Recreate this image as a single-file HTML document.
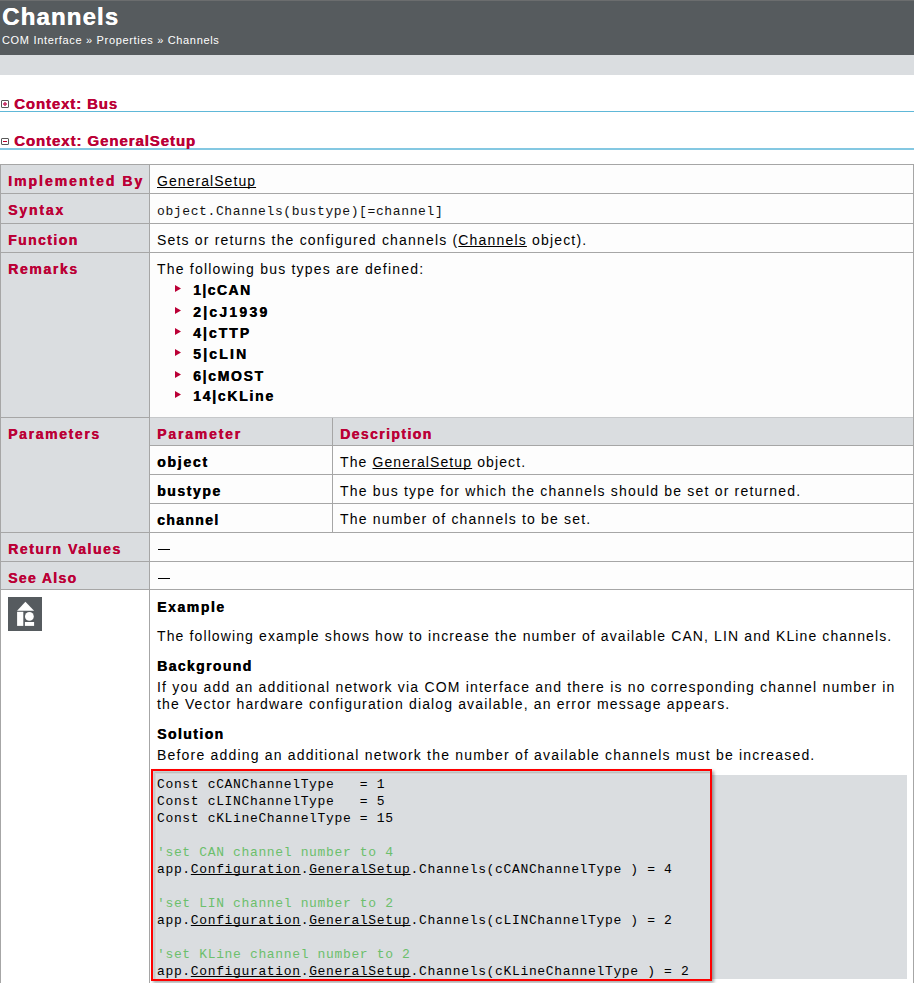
<!DOCTYPE html>
<html><head><meta charset="utf-8"><style>
html,body{margin:0;padding:0;background:#fff;width:914px;height:983px;overflow:hidden;position:relative}
body>div,body>svg{position:absolute}
.t{white-space:pre}
u{text-decoration:underline;text-underline-offset:1px;text-decoration-skip-ink:none}
</style></head><body>
<div style="left:0px;top:0px;width:914px;height:55px;background:#565b5e;"></div>
<div style="left:0px;top:0px;width:914px;height:1px;background:#6b6d6e;"></div>
<div class="t" style="left:2px;top:7px;font-family:'Liberation Sans',sans-serif;font-size:24px;line-height:20px;color:#fff;letter-spacing:1.143px;font-weight:bold;text-shadow:0.4px 0 0 #fff;">Channels</div>
<div class="t" style="left:2px;top:30px;font-family:'Liberation Sans',sans-serif;font-size:11px;line-height:20px;color:#fff;letter-spacing:0.674px;">COM Interface &raquo; Properties &raquo; Channels</div>
<div style="left:0px;top:55px;width:914px;height:20px;background:#dadde0;"></div>
<div style="left:1px;top:100px;width:6px;height:6px;border:1px solid #585858;border-radius:1px;background:#fff"></div>
<div style="left:4px;top:102px;width:2px;height:4px;background:#d4608a;"></div>
<div style="left:3px;top:103px;width:4px;height:2px;background:#d4608a;"></div>
<div style="left:4px;top:103px;width:2px;height:2px;background:#c8386a;"></div>
<div style="left:1px;top:138px;width:6px;height:5px;border:1px solid #585858;border-radius:1px;background:#fff"></div>
<div style="left:3px;top:141px;width:4px;height:1px;background:#c0002a;"></div>
<div style="left:0px;top:111px;width:914px;height:1px;background:#60b8d8;"></div>
<div style="left:0px;top:148px;width:914px;height:2px;background:#84c8e2;"></div>
<div class="t" style="left:14px;top:94px;font-family:'Liberation Sans',sans-serif;font-size:15px;line-height:20px;color:#bb0036;letter-spacing:0.879px;font-weight:bold;text-shadow:0.4px 0 0 #bb0036;">Context: Bus</div>
<div class="t" style="left:14px;top:131px;font-family:'Liberation Sans',sans-serif;font-size:15px;line-height:20px;color:#bb0036;letter-spacing:0.923px;font-weight:bold;text-shadow:0.4px 0 0 #bb0036;">Context: GeneralSetup</div>
<div style="left:0px;top:164px;width:914px;height:836px;background:#fdfdfd;"></div>
<div style="left:0px;top:164px;width:149px;height:836px;background:#dadde0;"></div>
<div style="left:1px;top:590px;width:148px;height:400px;background:#fff;"></div>
<div style="left:150px;top:590px;width:763px;height:400px;background:#fff;"></div>
<div style="left:150px;top:589px;width:763px;height:1px;background:#c9c9c9;"></div>
<div style="left:0px;top:164px;width:914px;height:1px;background:#a6a6a6;"></div>
<div style="left:0px;top:193px;width:914px;height:1px;background:#a6a6a6;"></div>
<div style="left:0px;top:223px;width:914px;height:1px;background:#a6a6a6;"></div>
<div style="left:0px;top:252px;width:914px;height:1px;background:#a6a6a6;"></div>
<div style="left:0px;top:417px;width:914px;height:1px;background:#a6a6a6;"></div>
<div style="left:0px;top:532px;width:914px;height:1px;background:#a6a6a6;"></div>
<div style="left:0px;top:561px;width:914px;height:1px;background:#a6a6a6;"></div>
<div style="left:0px;top:589px;width:914px;height:1px;background:#a6a6a6;"></div>
<div style="left:0px;top:164px;width:1px;height:1000px;background:#a6a6a6;"></div>
<div style="left:149px;top:164px;width:1px;height:1000px;background:#a6a6a6;"></div>
<div style="left:913px;top:164px;width:1px;height:1000px;background:#a6a6a6;"></div>
<div style="left:150px;top:418px;width:763px;height:27px;background:#dadde0;"></div>
<div style="left:150px;top:445px;width:763px;height:1px;background:#a6a6a6;"></div>
<div style="left:150px;top:474px;width:763px;height:1px;background:#a6a6a6;"></div>
<div style="left:150px;top:503px;width:763px;height:1px;background:#a6a6a6;"></div>
<div style="left:332px;top:418px;width:1px;height:114px;background:#a6a6a6;"></div>
<div style="left:150px;top:417px;width:763px;height:1px;background:#c6c8ca;"></div>
<div class="t" style="left:8px;top:171px;font-family:'Liberation Sans',sans-serif;font-size:14px;line-height:20px;color:#bb0036;letter-spacing:1.992px;font-weight:bold;text-shadow:0.4px 0 0 #bb0036;">Implemented By</div>
<div class="t" style="left:8px;top:200px;font-family:'Liberation Sans',sans-serif;font-size:14px;line-height:20px;color:#bb0036;letter-spacing:1.822px;font-weight:bold;text-shadow:0.4px 0 0 #bb0036;">Syntax</div>
<div class="t" style="left:8px;top:230px;font-family:'Liberation Sans',sans-serif;font-size:14px;line-height:20px;color:#bb0036;letter-spacing:1.420px;font-weight:bold;text-shadow:0.4px 0 0 #bb0036;">Function</div>
<div class="t" style="left:8px;top:259px;font-family:'Liberation Sans',sans-serif;font-size:14px;line-height:20px;color:#bb0036;letter-spacing:1.643px;font-weight:bold;text-shadow:0.4px 0 0 #bb0036;">Remarks</div>
<div class="t" style="left:8px;top:424px;font-family:'Liberation Sans',sans-serif;font-size:14px;line-height:20px;color:#bb0036;letter-spacing:1.637px;font-weight:bold;text-shadow:0.4px 0 0 #bb0036;">Parameters</div>
<div class="t" style="left:8px;top:539px;font-family:'Liberation Sans',sans-serif;font-size:14px;line-height:20px;color:#bb0036;letter-spacing:1.555px;font-weight:bold;text-shadow:0.4px 0 0 #bb0036;">Return Values</div>
<div class="t" style="left:8px;top:568px;font-family:'Liberation Sans',sans-serif;font-size:14px;line-height:20px;color:#bb0036;letter-spacing:1.342px;font-weight:bold;text-shadow:0.4px 0 0 #bb0036;">See Also</div>
<div class="t" style="left:157px;top:171px;font-family:'Liberation Sans',sans-serif;font-size:14px;line-height:20px;color:#000;letter-spacing:1.058px;"><u>GeneralSetup</u></div>
<div class="t" style="left:157px;top:202px;font-family:'Liberation Mono',monospace;font-size:13px;line-height:20px;color:#111;letter-spacing:0.620px;">object.Channels(bustype)[=channel]</div>
<div class="t" style="left:157px;top:230px;font-family:'Liberation Sans',sans-serif;font-size:14px;line-height:20px;color:#000;letter-spacing:1.180px;">Sets or returns the configured channels (<u>Channels</u> object).</div>
<div class="t" style="left:157px;top:259px;font-family:'Liberation Sans',sans-serif;font-size:14px;line-height:20px;color:#000;letter-spacing:1.199px;">The following bus types are defined:</div>
<svg style="left:175px;top:285px" width="7" height="7"><path d="M0 0L6 3.5L0 7Z" fill="#bb0036"/></svg>
<div class="t" style="left:193px;top:280px;font-family:'Liberation Sans',sans-serif;font-size:14px;line-height:20px;color:#000;letter-spacing:1.438px;font-weight:bold;text-shadow:0.4px 0 0 #000;">1|cCAN</div>
<svg style="left:175px;top:307px" width="7" height="7"><path d="M0 0L6 3.5L0 7Z" fill="#bb0036"/></svg>
<div class="t" style="left:193px;top:302px;font-family:'Liberation Sans',sans-serif;font-size:14px;line-height:20px;color:#000;letter-spacing:2.230px;font-weight:bold;text-shadow:0.4px 0 0 #000;">2|cJ1939</div>
<svg style="left:175px;top:328px" width="7" height="7"><path d="M0 0L6 3.5L0 7Z" fill="#bb0036"/></svg>
<div class="t" style="left:193px;top:323px;font-family:'Liberation Sans',sans-serif;font-size:14px;line-height:20px;color:#000;letter-spacing:2.016px;font-weight:bold;text-shadow:0.4px 0 0 #000;">4|cTTP</div>
<svg style="left:175px;top:349px" width="7" height="7"><path d="M0 0L6 3.5L0 7Z" fill="#bb0036"/></svg>
<div class="t" style="left:193px;top:344px;font-family:'Liberation Sans',sans-serif;font-size:14px;line-height:20px;color:#000;letter-spacing:2.194px;font-weight:bold;text-shadow:0.4px 0 0 #000;">5|cLIN</div>
<svg style="left:175px;top:371px" width="7" height="7"><path d="M0 0L6 3.5L0 7Z" fill="#bb0036"/></svg>
<div class="t" style="left:193px;top:366px;font-family:'Liberation Sans',sans-serif;font-size:14px;line-height:20px;color:#000;letter-spacing:1.680px;font-weight:bold;text-shadow:0.4px 0 0 #000;">6|cMOST</div>
<svg style="left:175px;top:391px" width="7" height="7"><path d="M0 0L6 3.5L0 7Z" fill="#bb0036"/></svg>
<div class="t" style="left:193px;top:386px;font-family:'Liberation Sans',sans-serif;font-size:14px;line-height:20px;color:#000;letter-spacing:1.732px;font-weight:bold;text-shadow:0.4px 0 0 #000;">14|cKLine</div>
<div class="t" style="left:157px;top:424px;font-family:'Liberation Sans',sans-serif;font-size:14px;line-height:20px;color:#bb0036;letter-spacing:1.814px;font-weight:bold;text-shadow:0.4px 0 0 #bb0036;">Parameter</div>
<div class="t" style="left:340px;top:424px;font-family:'Liberation Sans',sans-serif;font-size:14px;line-height:20px;color:#bb0036;letter-spacing:1.402px;font-weight:bold;text-shadow:0.4px 0 0 #bb0036;">Description</div>
<div class="t" style="left:157px;top:452px;font-family:'Liberation Sans',sans-serif;font-size:14px;line-height:20px;color:#000;letter-spacing:1.759px;font-weight:bold;text-shadow:0.4px 0 0 #000;">object</div>
<div class="t" style="left:157px;top:481px;font-family:'Liberation Sans',sans-serif;font-size:14px;line-height:20px;color:#000;letter-spacing:1.560px;font-weight:bold;text-shadow:0.4px 0 0 #000;">bustype</div>
<div class="t" style="left:157px;top:510px;font-family:'Liberation Sans',sans-serif;font-size:14px;line-height:20px;color:#000;letter-spacing:1.354px;font-weight:bold;text-shadow:0.4px 0 0 #000;">channel</div>
<div class="t" style="left:340px;top:452px;font-family:'Liberation Sans',sans-serif;font-size:14px;line-height:20px;color:#000;letter-spacing:1.109px;">The <u>GeneralSetup</u> object.</div>
<div class="t" style="left:340px;top:481px;font-family:'Liberation Sans',sans-serif;font-size:14px;line-height:20px;color:#000;letter-spacing:1.190px;">The bus type for which the channels should be set or returned.</div>
<div class="t" style="left:340px;top:509px;font-family:'Liberation Sans',sans-serif;font-size:14px;line-height:20px;color:#000;letter-spacing:1.176px;">The number of channels to be set.</div>
<div style="left:158px;top:549px;width:12px;height:1px;background:#000;"></div>
<div style="left:158px;top:578px;width:12px;height:1px;background:#000;"></div>
<svg style="left:8px;top:597px" width="34" height="34" viewBox="0 0 34 34"><rect width="34" height="34" fill="#565b5f"/><path d="M17.4 4.7L26.1 13.7H9.1Z" fill="#fff"/><rect x="9.1" y="14.8" width="6.2" height="14.1" fill="#fff"/><circle cx="21.4" cy="19.4" r="4.4" fill="#fff"/><rect x="16.9" y="25" width="9.2" height="3.9" fill="#fff"/></svg>
<div class="t" style="left:157px;top:597px;font-family:'Liberation Sans',sans-serif;font-size:14px;line-height:20px;color:#000;letter-spacing:1.570px;font-weight:bold;text-shadow:0.4px 0 0 #000;">Example</div>
<div class="t" style="left:157px;top:626px;font-family:'Liberation Sans',sans-serif;font-size:14px;line-height:20px;color:#000;letter-spacing:1.118px;">The following example shows how to increase the number of available CAN, LIN and KLine channels.</div>
<div class="t" style="left:157px;top:656px;font-family:'Liberation Sans',sans-serif;font-size:14px;line-height:20px;color:#000;letter-spacing:1.373px;font-weight:bold;text-shadow:0.4px 0 0 #000;">Background</div>
<div class="t" style="left:157px;top:677px;font-family:'Liberation Sans',sans-serif;font-size:14px;line-height:20px;color:#000;letter-spacing:1.190px;">If you add an additional network via COM interface and there is no corresponding channel number in</div>
<div class="t" style="left:157px;top:694px;font-family:'Liberation Sans',sans-serif;font-size:14px;line-height:20px;color:#000;letter-spacing:1.139px;">the Vector hardware configuration dialog available, an error message appears.</div>
<div class="t" style="left:157px;top:724px;font-family:'Liberation Sans',sans-serif;font-size:14px;line-height:20px;color:#000;letter-spacing:1.433px;font-weight:bold;text-shadow:0.4px 0 0 #000;">Solution</div>
<div class="t" style="left:157px;top:745px;font-family:'Liberation Sans',sans-serif;font-size:14px;line-height:20px;color:#000;letter-spacing:1.190px;">Before adding an additional network the number of available channels must be increased.</div>
<div style="left:153px;top:771px;width:557px;height:208px;background:#dadada;"></div>
<div style="left:153px;top:771px;width:557px;height:1px;background:#c4d2d2;"></div>
<div style="left:153px;top:772px;width:557px;height:1px;background:#bfbfbf;"></div>
<div style="left:153px;top:773px;width:557px;height:1px;background:#d4d4d4;"></div>
<div style="left:153px;top:771px;width:1px;height:208px;background:#c4d2d2;"></div>
<div style="left:154px;top:772px;width:1px;height:207px;background:#c8c8c8;"></div>
<div style="left:155px;top:773px;width:1px;height:206px;background:#d4d4d4;"></div>
<div style="left:156px;top:774px;width:1px;height:205px;background:#e0e0e0;"></div>
<div style="left:157px;top:775px;width:750px;height:204px;background:#dadde0;"></div>
<div style="left:156px;top:774px;width:554px;height:1px;background:#dfdfdf;"></div>
<div class="t" style="left:157px;top:775px;font-family:'Liberation Mono',monospace;font-size:13px;line-height:20px;color:#000;letter-spacing:0.650px;">Const cCANChannelType   = 1</div>
<div class="t" style="left:157px;top:792px;font-family:'Liberation Mono',monospace;font-size:13px;line-height:20px;color:#000;letter-spacing:0.650px;">Const cLINChannelType   = 5</div>
<div class="t" style="left:157px;top:809px;font-family:'Liberation Mono',monospace;font-size:13px;line-height:20px;color:#000;letter-spacing:0.650px;">Const cKLineChannelType = 15</div>
<div class="t" style="left:157px;top:843px;font-family:'Liberation Mono',monospace;font-size:13px;line-height:20px;color:#6cbf6c;letter-spacing:0.650px;">'set CAN channel number to 4</div>
<div class="t" style="left:157px;top:860px;font-family:'Liberation Mono',monospace;font-size:13px;line-height:20px;color:#000;letter-spacing:0.650px;">app.<u>Configuration</u>.<u>GeneralSetup</u>.Channels(cCANChannelType ) = 4</div>
<div class="t" style="left:157px;top:894px;font-family:'Liberation Mono',monospace;font-size:13px;line-height:20px;color:#6cbf6c;letter-spacing:0.650px;">'set LIN channel number to 2</div>
<div class="t" style="left:157px;top:911px;font-family:'Liberation Mono',monospace;font-size:13px;line-height:20px;color:#000;letter-spacing:0.650px;">app.<u>Configuration</u>.<u>GeneralSetup</u>.Channels(cLINChannelType ) = 2</div>
<div class="t" style="left:157px;top:945px;font-family:'Liberation Mono',monospace;font-size:13px;line-height:20px;color:#6cbf6c;letter-spacing:0.650px;">'set KLine channel number to 2</div>
<div class="t" style="left:157px;top:962px;font-family:'Liberation Mono',monospace;font-size:13px;line-height:20px;color:#000;letter-spacing:0.650px;">app.<u>Configuration</u>.<u>GeneralSetup</u>.Channels(cKLineChannelType ) = 2</div>
<div style="left:151px;top:769px;width:557px;height:208px;border:2px solid #ff0000;box-shadow:2px 2px 3px rgba(0,0,0,0.35)"></div>
</body></html>
